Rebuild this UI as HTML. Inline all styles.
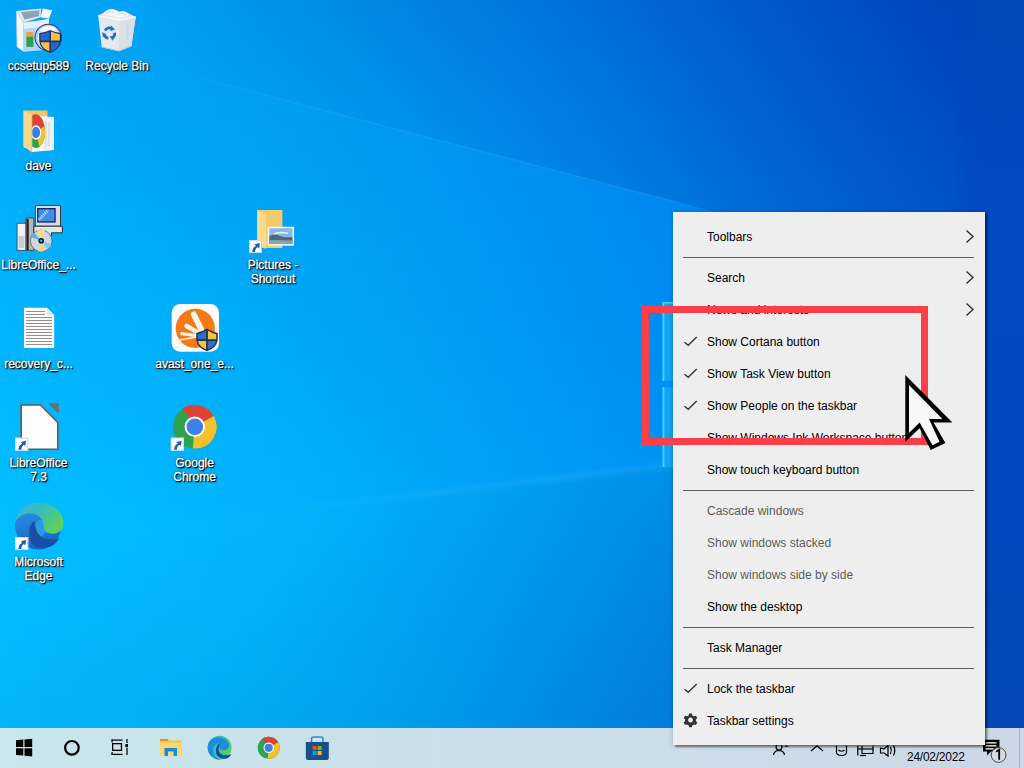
<!DOCTYPE html>
<html><head><meta charset="utf-8">
<style>
html,body{margin:0;padding:0;width:1024px;height:768px;overflow:hidden;}
body{position:relative;font-family:"Liberation Sans",sans-serif;background:#0090e8;}
.bgr{position:absolute;left:0;top:0;width:1024px;height:728px;overflow:hidden;}
.bgr i{position:absolute;left:0;width:1024px;height:8px;display:block;}
.lbl{position:absolute;color:#fff;font-size:12px;line-height:14px;text-align:center;width:90px;-webkit-text-stroke:0.3px #fff;text-shadow:1px 1px 0 #000,1px 1px 2px #000,0 0 2px rgba(0,0,0,.8);white-space:nowrap;}
.ic{position:absolute;}
#taskbar{position:absolute;left:0;top:728px;width:1024px;height:40px;background:linear-gradient(90deg,#c8e6ec 0px,#cae2ea 300px,#ccdde8 620px,#ccd7e6 1024px);}
#menu{position:absolute;left:673px;top:212px;width:312px;height:533px;background:#eeeeee;box-shadow:2px 2px 2px rgba(0,0,0,.45),0 0 5px rgba(0,0,0,.22);}
.mi{position:absolute;left:34px;font-size:12px;color:#000;white-space:nowrap;line-height:14px;}
.dis{color:#5c5c5c;}
.sep{position:absolute;left:10px;width:291px;height:1px;background:#5f5f5f;}
.chk{position:absolute;left:11px;}
.arr{position:absolute;left:290px;}
</style></head><body>
<!--BG-->
<div id="bgM" class="bgr" style="">
<i style="top:0px;background:linear-gradient(90deg,#00a7f6,#00a4f4,#00a1f3,#009ef2,#009bf1,#0097f0,#0093ef,#008fef,#008bef,#0086ee,#0082ee,#007eed,#007aec,#0076eb,#0072e9,#006fe8,#006be6)"></i>
<i style="top:8px;background:linear-gradient(90deg,#00a7f6,#00a4f5,#00a1f3,#009ef2,#009bf1,#0097f0,#0094ef,#008fef,#008bef,#0087ee,#0082ee,#007eed,#007aec,#0076eb,#0073ea,#006fe8,#006be7)"></i>
<i style="top:16px;background:linear-gradient(90deg,#00a8f6,#00a5f5,#00a2f3,#009ff2,#009bf1,#0098f0,#0094ef,#0090ef,#008cef,#0087ef,#0083ee,#007fee,#007bed,#0077eb,#0073ea,#006fe8,#006ce7)"></i>
<i style="top:24px;background:linear-gradient(90deg,#00a8f6,#00a5f5,#00a2f4,#009ff2,#009cf1,#0098f0,#0094f0,#0090ef,#008cef,#0087ef,#0083ee,#007fee,#007bed,#0077ec,#0073ea,#0070e9,#006ce7)"></i>
<i style="top:32px;background:linear-gradient(90deg,#00a8f6,#00a5f5,#00a2f4,#009ff2,#009cf1,#0099f0,#0095f0,#0091ef,#008cef,#0088ef,#0083ef,#007fee,#007bed,#0077ec,#0074ea,#0070e9,#006ce7)"></i>
<i style="top:40px;background:linear-gradient(90deg,#00a9f7,#00a6f5,#00a3f4,#00a0f3,#009df1,#0099f0,#0095f0,#0091ef,#008def,#0088ef,#0084ef,#0080ee,#007bed,#0078ec,#0074ea,#0070e9,#006de7)"></i>
<i style="top:48px;background:linear-gradient(90deg,#00a9f7,#00a6f5,#00a3f4,#00a0f3,#009df2,#009af1,#0096f0,#0091f0,#008def,#0089ef,#0084ef,#0080ee,#007ced,#0078ec,#0074eb,#0071e9,#006de8)"></i>
<i style="top:56px;background:linear-gradient(90deg,#00a9f7,#00a6f6,#00a4f4,#00a1f3,#009df2,#009af1,#0096f0,#0092f0,#008df0,#0089ef,#0084ef,#0080ef,#007cee,#0078ec,#0075eb,#0071e9,#006de8)"></i>
<i style="top:64px;background:linear-gradient(90deg,#00aaf7,#00a7f6,#00a4f4,#00a1f3,#009ef2,#009af1,#0096f0,#0092f0,#008ef0,#0089f0,#0085ef,#0081ef,#007cee,#0079ed,#0075eb,#0071e9,#006ee8)"></i>
<i style="top:72px;background:linear-gradient(90deg,#00aaf7,#00a7f6,#00a4f5,#00a1f3,#009ef2,#009bf1,#0097f0,#0093f0,#008ef0,#008af0,#0085ef,#0081ef,#007dee,#0079ed,#0075eb,#0072ea,#006ee8)"></i>
<i style="top:80px;background:linear-gradient(90deg,#00aaf8,#00a7f6,#00a5f5,#00a2f3,#009ff2,#009bf1,#0097f1,#0093f0,#008ff0,#008af0,#0085f0,#0081ef,#007dee,#0079ed,#0076eb,#0072ea,#006ee8)"></i>
<i style="top:88px;background:linear-gradient(90deg,#00abf8,#00a8f6,#00a5f5,#00a2f4,#009ff2,#009cf1,#0098f1,#0093f0,#008ff0,#008af0,#0086f0,#0081ef,#007dee,#007aed,#0076ec,#0072ea,#006fe8)"></i>
<i style="top:96px;background:linear-gradient(90deg,#00abf8,#00a8f7,#00a5f5,#00a3f4,#00a0f2,#009cf2,#0098f1,#0094f0,#008ff0,#008bf0,#0086f0,#0082ef,#007eee,#007aed,#0076ec,#0073ea,#006fe9)"></i>
<i style="top:104px;background:linear-gradient(90deg,#00abf8,#00a8f7,#00a6f5,#00a3f4,#00a0f3,#009cf2,#0099f1,#0094f1,#0090f0,#008bf0,#0086f0,#0082f0,#007eef,#007aed,#0076ec,#0073ea,#006fe9)"></i>
<i style="top:112px;background:linear-gradient(90deg,#00acf8,#00a9f7,#00a6f5,#00a3f4,#00a0f3,#009df2,#0099f1,#0095f1,#0090f1,#008bf0,#0087f0,#0082f0,#007eef,#007aee,#0077ec,#0073eb,#0070e9)"></i>
<i style="top:120px;background:linear-gradient(90deg,#00acf8,#00a9f7,#00a7f6,#00a4f4,#00a1f3,#009df2,#0099f1,#0095f1,#0090f1,#008cf1,#0087f0,#0083f0,#007fef,#007bee,#0077ec,#0074eb,#0070e9)"></i>
<i style="top:128px;background:linear-gradient(90deg,#00acf9,#00a9f7,#00a7f6,#00a4f4,#00a1f3,#009ef2,#009af1,#0095f1,#0091f1,#008cf1,#0087f0,#0083f0,#007fef,#007bee,#0077ec,#0074eb,#0070e9)"></i>
<i style="top:136px;background:linear-gradient(90deg,#00adf9,#00aaf7,#00a7f6,#00a5f5,#00a2f3,#009ef2,#009af2,#0096f1,#0091f1,#008cf1,#0088f1,#0083f0,#007fef,#007bee,#0078ed,#0074eb,#0071e9)"></i>
<i style="top:144px;background:linear-gradient(90deg,#00adf9,#00aaf8,#00a8f6,#00a5f5,#00a2f4,#009ef2,#009bf2,#0096f1,#0091f1,#008df1,#0088f1,#0084f0,#0080ef,#007cee,#0078ed,#0075eb,#0071ea)"></i>
<i style="top:152px;background:linear-gradient(90deg,#00adf9,#00abf8,#00a8f6,#00a5f5,#00a2f4,#009ff3,#009bf2,#0097f1,#0092f1,#008df1,#0088f1,#0084f0,#0080f0,#007cee,#0078ed,#0075eb,#0072ea)"></i>
<i style="top:160px;background:linear-gradient(90deg,#00aef9,#00abf8,#00a8f7,#00a6f5,#00a3f4,#009ff3,#009bf2,#0097f2,#0092f1,#008df1,#0089f1,#0084f0,#0080f0,#007cef,#0079ed,#0075ec,#0072ea)"></i>
<i style="top:168px;background:linear-gradient(90deg,#00aefa,#00abf8,#00a9f7,#00a6f5,#00a3f4,#00a0f3,#009cf2,#0097f2,#0093f1,#008ef1,#0089f1,#0085f1,#0080f0,#007def,#0079ed,#0076ec,#0072ea)"></i>
<i style="top:176px;background:linear-gradient(90deg,#00aefa,#00acf8,#00a9f7,#00a6f6,#00a4f4,#00a0f3,#009cf2,#0098f2,#0093f2,#008ef1,#0089f1,#0085f1,#0081f0,#007def,#0079ed,#0076ec,#0073ea)"></i>
<i style="top:184px;background:linear-gradient(90deg,#00affa,#00acf9,#00a9f7,#00a7f6,#00a4f4,#00a0f3,#009cf2,#0098f2,#0093f2,#008ef2,#008af1,#0085f1,#0081f0,#007def,#007aee,#0076ec,#0073ea)"></i>
<i style="top:192px;background:linear-gradient(90deg,#00affa,#00acf9,#00aaf7,#00a7f6,#00a4f5,#00a1f3,#009df3,#0098f2,#0094f2,#008ff2,#008af1,#0085f1,#0081f0,#007eef,#007aee,#0077ec,#0073eb)"></i>
<i style="top:200px;background:linear-gradient(90deg,#00affa,#00adf9,#00aaf8,#00a8f6,#00a5f5,#00a1f4,#009df3,#0099f2,#0094f2,#008ff2,#008af2,#0086f1,#0082f0,#007eef,#007aee,#0077ec,#0074eb)"></i>
<i style="top:208px;background:linear-gradient(90deg,#00b0fb,#00adf9,#00abf8,#00a8f6,#00a5f5,#00a2f4,#009ef3,#0099f2,#0094f2,#008ff2,#008af2,#0086f1,#0082f0,#007eef,#007bee,#0077ec,#0074eb)"></i>
<i style="top:216px;background:linear-gradient(90deg,#00b0fb,#00adf9,#00abf8,#00a8f7,#00a5f5,#00a2f4,#009ef3,#0099f2,#0095f2,#0090f2,#008bf2,#0086f1,#0082f1,#007eef,#007bee,#0078ed,#0074eb)"></i>
<i style="top:224px;background:linear-gradient(90deg,#00b0fb,#00aefa,#00abf8,#00a9f7,#00a6f5,#00a2f4,#009ef3,#009af3,#0095f2,#0090f2,#008bf2,#0087f1,#0083f1,#007ff0,#007bee,#0078ed,#0075eb)"></i>
<i style="top:232px;background:linear-gradient(90deg,#00b1fb,#00aefa,#00acf8,#00a9f7,#00a6f6,#00a3f4,#009ff3,#009af3,#0095f2,#0090f2,#008bf2,#0087f1,#0083f1,#007ff0,#007cee,#0078ed,#0075eb)"></i>
<i style="top:240px;background:linear-gradient(90deg,#00b1fb,#00aefa,#00acf9,#00aaf7,#00a7f6,#00a3f5,#009ff4,#009bf3,#0096f2,#0091f2,#008cf2,#0087f2,#0083f1,#007ff0,#007cef,#0079ed,#0075ec)"></i>
<i style="top:248px;background:linear-gradient(90deg,#00b1fb,#00affa,#00acf9,#00aaf7,#00a7f6,#00a4f5,#00a0f4,#009bf3,#0096f3,#0091f2,#008cf2,#0088f2,#0083f1,#0080f0,#007cef,#0079ed,#0076ec)"></i>
<i style="top:256px;background:linear-gradient(90deg,#00b2fc,#00affa,#00adf9,#00aaf8,#00a7f6,#00a4f5,#00a0f4,#009bf3,#0096f3,#0091f2,#008cf2,#0088f2,#0084f1,#0080f0,#007def,#0079ed,#0076ec)"></i>
<i style="top:264px;background:linear-gradient(90deg,#00b2fc,#00affb,#00adf9,#00abf8,#00a8f6,#00a4f5,#00a0f4,#009cf3,#0097f3,#0092f3,#008df2,#0088f2,#0084f1,#0080f0,#007def,#007aed,#0076ec)"></i>
<i style="top:272px;background:linear-gradient(90deg,#00b2fc,#00b0fb,#00adfa,#00abf8,#00a8f7,#00a5f5,#00a1f4,#009cf3,#0097f3,#0092f3,#008df2,#0088f2,#0084f1,#0081f0,#007def,#007aee,#0077ec)"></i>
<i style="top:280px;background:linear-gradient(90deg,#00b3fc,#00b0fb,#00aefa,#00abf8,#00a9f7,#00a5f5,#00a1f4,#009cf4,#0097f3,#0092f3,#008df2,#0089f2,#0085f1,#0081f0,#007eef,#007aee,#0077ec)"></i>
<i style="top:288px;background:linear-gradient(90deg,#00b3fc,#00b1fb,#00aefa,#00acf8,#00a9f7,#00a5f6,#00a1f5,#009df4,#0098f3,#0093f3,#008ef3,#0089f2,#0085f1,#0081f0,#007eef,#007bee,#0077ec)"></i>
<i style="top:296px;background:linear-gradient(90deg,#00b3fd,#00b1fb,#00affa,#00acf9,#00a9f7,#00a6f6,#00a2f5,#009df4,#0098f3,#0093f3,#008ef3,#0089f2,#0085f1,#0082f1,#007eef,#007bee,#0078ed)"></i>
<i style="top:304px;background:linear-gradient(90deg,#00b4fd,#00b1fc,#00affa,#00adf9,#00aaf7,#00a6f6,#00a2f5,#009df4,#0098f3,#0093f3,#008ef3,#008af2,#0086f2,#0082f1,#007fef,#007bee,#0078ed)"></i>
<i style="top:312px;background:linear-gradient(90deg,#01b4fd,#00b2fc,#00affb,#00adf9,#00aaf8,#00a7f6,#00a2f5,#009ef4,#0099f4,#0093f3,#008ff3,#008af2,#0086f2,#0082f1,#007ff0,#007cee,#0079ed)"></i>
<i style="top:320px;background:linear-gradient(90deg,#01b4fd,#00b2fc,#00b0fb,#00adf9,#00aaf8,#00a7f6,#00a3f5,#009ef4,#0099f4,#0094f3,#008ff3,#008af2,#0086f2,#0083f1,#007ff0,#007cee,#0079ed)"></i>
<i style="top:328px;background:linear-gradient(90deg,#01b5fd,#00b2fc,#00b0fb,#00aefa,#00abf8,#00a7f7,#00a3f5,#009ef4,#0099f4,#0094f3,#008ff3,#008bf2,#0087f2,#0083f1,#0080f0,#007cee,#0079ed)"></i>
<i style="top:336px;background:linear-gradient(90deg,#01b5fe,#01b3fc,#00b0fb,#00aefa,#00abf8,#00a8f7,#00a4f6,#009ff5,#009af4,#0094f3,#0090f3,#008bf3,#0087f2,#0083f1,#0080f0,#007def,#007aed)"></i>
<i style="top:344px;background:linear-gradient(90deg,#01b6fe,#01b3fd,#00b1fb,#00aefa,#00acf8,#00a8f7,#00a4f6,#009ff5,#009af4,#0095f4,#0090f3,#008bf3,#0087f2,#0084f1,#0080f0,#007def,#007aed)"></i>
<i style="top:352px;background:linear-gradient(90deg,#01b6fe,#01b4fd,#00b1fc,#00affa,#00acf9,#00a8f7,#00a4f6,#009ff5,#009af4,#0095f4,#0090f3,#008cf3,#0088f2,#0084f1,#0081f0,#007def,#007aed)"></i>
<i style="top:360px;background:linear-gradient(90deg,#01b6fe,#01b4fd,#00b2fc,#00affa,#00acf9,#00a9f7,#00a5f6,#00a0f5,#009bf4,#0095f4,#0091f3,#008cf3,#0088f2,#0084f1,#0081f0,#007eef,#007bee)"></i>
<i style="top:368px;background:linear-gradient(90deg,#01b7fe,#01b4fd,#01b2fc,#00b0fb,#00adf9,#00a9f8,#00a5f6,#00a0f5,#009bf4,#0096f4,#0091f3,#008cf3,#0088f2,#0085f1,#0081f0,#007eef,#007bee)"></i>
<i style="top:376px;background:linear-gradient(90deg,#01b7fe,#01b5fd,#01b2fc,#00b0fb,#00adf9,#00aaf8,#00a5f7,#00a1f5,#009bf5,#0096f4,#0091f4,#008df3,#0089f2,#0085f1,#0082f0,#007fef,#007bee)"></i>
<i style="top:384px;background:linear-gradient(90deg,#01b8ff,#01b5fe,#01b3fc,#00b0fb,#00adfa,#00aaf8,#00a6f7,#00a1f6,#009cf5,#0097f4,#0092f4,#008df3,#0089f2,#0085f2,#0082f1,#007fef,#007cee)"></i>
<i style="top:392px;background:linear-gradient(90deg,#01b8ff,#01b5fe,#01b3fd,#00b1fb,#00aefa,#00aaf8,#00a6f7,#00a1f6,#009cf5,#0097f4,#0092f4,#008df3,#0089f3,#0086f2,#0082f1,#007fef,#007cee)"></i>
<i style="top:400px;background:linear-gradient(90deg,#01b8ff,#01b6fe,#01b3fd,#00b1fb,#00aefa,#00abf8,#00a6f7,#00a2f6,#009cf5,#0097f4,#0092f4,#008ef3,#008af3,#0086f2,#0083f1,#0080f0,#007dee)"></i>
<i style="top:408px;background:linear-gradient(90deg,#01b9ff,#01b6fe,#01b4fd,#00b1fc,#00aefa,#00abf9,#00a7f7,#00a2f6,#009df5,#0098f5,#0093f4,#008ef3,#008af3,#0087f2,#0083f1,#0080f0,#007dee)"></i>
<i style="top:416px;background:linear-gradient(90deg,#01b9ff,#01b7fe,#01b4fd,#01b2fc,#00affa,#00abf9,#00a7f8,#00a2f6,#009df5,#0098f5,#0093f4,#008ff3,#008af3,#0087f2,#0084f1,#0080f0,#007def)"></i>
<i style="top:424px;background:linear-gradient(90deg,#01baff,#01b7fe,#01b5fd,#01b2fc,#00affb,#00acf9,#00a7f8,#00a3f6,#009df6,#0098f5,#0093f4,#008ff4,#008bf3,#0087f2,#0084f1,#0081f0,#007eef)"></i>
<i style="top:432px;background:linear-gradient(90deg,#01baff,#01b7ff,#01b5fe,#01b3fc,#00b0fb,#00acf9,#00a8f8,#00a3f7,#009ef6,#0099f5,#0094f4,#008ff4,#008bf3,#0088f2,#0084f1,#0081f0,#007eef)"></i>
<i style="top:440px;background:linear-gradient(90deg,#01baff,#01b8ff,#01b5fe,#01b3fc,#00b0fb,#00acfa,#00a8f8,#00a3f7,#009ef6,#0099f5,#0094f4,#0090f4,#008cf3,#0088f2,#0085f1,#0082f0,#007eef)"></i>
<i style="top:448px;background:linear-gradient(90deg,#01bbff,#01b8ff,#01b6fe,#01b3fd,#00b0fb,#00adfa,#00a8f8,#00a4f7,#009ff6,#0099f5,#0095f5,#0090f4,#008cf3,#0088f2,#0085f1,#0082f0,#007fef)"></i>
<i style="top:456px;background:linear-gradient(90deg,#01bbff,#01b9ff,#01b6fe,#01b4fd,#00b1fb,#00adfa,#00a9f9,#00a4f7,#009ff6,#009af5,#0095f5,#0090f4,#008cf3,#0089f3,#0086f2,#0082f0,#007fef)"></i>
<i style="top:464px;background:linear-gradient(90deg,#01bcff,#01b9ff,#01b7fe,#01b4fd,#00b1fc,#00adfa,#00a9f9,#00a4f7,#009ff6,#009af5,#0095f5,#0091f4,#008df3,#0089f3,#0086f2,#0083f1,#0080ef)"></i>
<i style="top:472px;background:linear-gradient(90deg,#01bcff,#01b9ff,#01b7fe,#01b4fd,#00b1fc,#00aefa,#00aaf9,#00a5f8,#00a0f7,#009bf6,#0096f5,#0091f4,#008df4,#008af3,#0086f2,#0083f1,#0080f0)"></i>
<i style="top:480px;background:linear-gradient(90deg,#01bdff,#01baff,#01b7ff,#01b5fd,#01b2fc,#00aefb,#00aaf9,#00a5f8,#00a0f7,#009bf6,#0096f5,#0092f4,#008ef4,#008af3,#0087f2,#0084f1,#0080f0)"></i>
<i style="top:488px;background:linear-gradient(90deg,#01bdff,#01baff,#01b8ff,#01b5fe,#01b2fc,#00aefb,#00aaf9,#00a5f8,#00a0f7,#009bf6,#0096f5,#0092f5,#008ef4,#008af3,#0087f2,#0084f1,#0081f0)"></i>
<i style="top:496px;background:linear-gradient(90deg,#01bdff,#01bbff,#01b8ff,#01b5fe,#01b2fc,#00affb,#00abfa,#00a6f8,#00a1f7,#009cf6,#0097f5,#0092f5,#008ef4,#008bf3,#0088f2,#0084f1,#0081f0)"></i>
<i style="top:504px;background:linear-gradient(90deg,#01beff,#01bbff,#01b9ff,#01b6fe,#01b3fd,#00affb,#00abfa,#00a6f8,#00a1f7,#009cf6,#0097f6,#0093f5,#008ff4,#008bf3,#0088f2,#0085f1,#0082f0)"></i>
<i style="top:512px;background:linear-gradient(90deg,#01beff,#01bcff,#01b9ff,#01b6fe,#01b3fd,#00b0fb,#00abfa,#00a7f9,#00a2f7,#009cf6,#0098f6,#0093f5,#008ff4,#008cf3,#0088f2,#0085f1,#0082f0)"></i>
<i style="top:520px;background:linear-gradient(90deg,#01bfff,#01bcff,#01b9ff,#01b7fe,#01b4fd,#00b0fc,#00acfa,#00a7f9,#00a2f8,#009df7,#0098f6,#0094f5,#0090f4,#008cf3,#0089f3,#0086f1,#0082f0)"></i>
<i style="top:528px;background:linear-gradient(90deg,#01bfff,#01bcff,#01baff,#01b7ff,#01b4fd,#00b0fc,#00acfa,#00a7f9,#00a2f8,#009df7,#0098f6,#0094f5,#0090f4,#008df4,#0089f3,#0086f2,#0083f0)"></i>
<i style="top:536px;background:linear-gradient(90deg,#01c0ff,#01bdff,#01baff,#01b7ff,#01b4fd,#00b1fc,#00acfb,#00a8f9,#00a3f8,#009ef7,#0099f6,#0095f5,#0091f5,#008df4,#008af3,#0086f2,#0083f1)"></i>
<i style="top:544px;background:linear-gradient(90deg,#02c0ff,#01bdff,#01baff,#01b8ff,#01b5fe,#00b1fc,#00adfb,#00a8f9,#00a3f8,#009ef7,#0099f6,#0095f5,#0091f5,#008df4,#008af3,#0087f2,#0084f1)"></i>
<i style="top:552px;background:linear-gradient(90deg,#02c0ff,#01beff,#01bbff,#01b8ff,#01b5fe,#00b1fc,#00adfb,#00a8fa,#00a3f8,#009ef7,#009af6,#0095f6,#0091f5,#008ef4,#008bf3,#0087f2,#0084f1)"></i>
<i style="top:560px;background:linear-gradient(90deg,#02c1ff,#01beff,#01bbff,#01b8ff,#01b5fe,#01b2fd,#00adfb,#00a9fa,#00a4f9,#009ff8,#009af7,#0096f6,#0092f5,#008ef4,#008bf3,#0088f2,#0084f1)"></i>
<i style="top:568px;background:linear-gradient(90deg,#02c1ff,#01beff,#01bcff,#01b9ff,#01b6fe,#01b2fd,#00aefb,#00a9fa,#00a4f9,#009ff8,#009bf7,#0096f6,#0092f5,#008ff4,#008bf3,#0088f2,#0085f1)"></i>
<i style="top:576px;background:linear-gradient(90deg,#02c2ff,#01bfff,#01bcff,#01b9ff,#01b6fe,#01b2fd,#00aefc,#00a9fa,#00a5f9,#00a0f8,#009bf7,#0097f6,#0093f5,#008ff4,#008cf3,#0089f2,#0085f1)"></i>
<i style="top:584px;background:linear-gradient(90deg,#02c2ff,#02bfff,#01bcff,#01baff,#01b6ff,#01b3fd,#00aefc,#00aafa,#00a5f9,#00a0f8,#009bf7,#0097f6,#0093f5,#0090f5,#008cf4,#0089f3,#0086f2)"></i>
<i style="top:592px;background:linear-gradient(90deg,#02c3ff,#02c0ff,#01bdff,#01baff,#01b7ff,#01b3fd,#00affc,#00aafb,#00a5f9,#00a1f8,#009cf7,#0098f6,#0094f6,#0090f5,#008df4,#0089f3,#0086f2)"></i>
<i style="top:600px;background:linear-gradient(90deg,#02c3ff,#02c0ff,#01bdff,#01baff,#01b7ff,#01b3fe,#00affc,#00abfb,#00a6fa,#00a1f8,#009cf7,#0098f7,#0094f6,#0090f5,#008df4,#008af3,#0087f2)"></i>
<i style="top:608px;background:linear-gradient(90deg,#02c3ff,#02c0ff,#01beff,#01bbff,#01b7ff,#01b4fe,#00b0fc,#00abfb,#00a6fa,#00a1f9,#009df8,#0098f7,#0095f6,#0091f5,#008ef4,#008af3,#0087f2)"></i>
<i style="top:616px;background:linear-gradient(90deg,#02c4ff,#02c1ff,#01beff,#01bbff,#01b8ff,#01b4fe,#00b0fd,#00abfb,#00a7fa,#00a2f9,#009df8,#0099f7,#0095f6,#0091f5,#008ef4,#008bf3,#0087f2)"></i>
<i style="top:624px;background:linear-gradient(90deg,#02c4ff,#02c1ff,#01beff,#01bbff,#01b8ff,#01b4fe,#01b0fd,#00acfb,#00a7fa,#00a2f9,#009ef8,#0099f7,#0095f6,#0092f5,#008ef4,#008bf3,#0088f2)"></i>
<i style="top:632px;background:linear-gradient(90deg,#02c5ff,#02c2ff,#01bfff,#01bcff,#01b8ff,#01b5fe,#01b1fd,#00acfc,#00a7fa,#00a3f9,#009ef8,#009af7,#0096f6,#0092f5,#008ff4,#008cf3,#0088f2)"></i>
<i style="top:640px;background:linear-gradient(90deg,#02c5ff,#02c2ff,#01bfff,#01bcff,#01b9ff,#01b5ff,#01b1fd,#00acfc,#00a8fb,#00a3f9,#009ef8,#009af7,#0096f7,#0093f6,#008ff5,#008cf4,#0089f3)"></i>
<i style="top:648px;background:linear-gradient(90deg,#02c6ff,#02c3ff,#01c0ff,#01bcff,#01b9ff,#01b5ff,#01b1fd,#00adfc,#00a8fb,#00a3fa,#009ff9,#009bf8,#0097f7,#0093f6,#0090f5,#008cf4,#0089f3)"></i>
<i style="top:656px;background:linear-gradient(90deg,#02c6ff,#02c3ff,#02c0ff,#01bdff,#01b9ff,#01b6ff,#01b2fe,#00adfc,#00a8fb,#00a4fa,#009ff9,#009bf8,#0097f7,#0094f6,#0090f5,#008df4,#0089f3)"></i>
<i style="top:664px;background:linear-gradient(90deg,#02c6ff,#02c3ff,#02c0ff,#01bdff,#01baff,#01b6ff,#01b2fe,#01aefc,#00a9fb,#00a4fa,#00a0f9,#009cf8,#0098f7,#0094f6,#0091f5,#008df4,#008af3)"></i>
<i style="top:672px;background:linear-gradient(90deg,#02c7ff,#02c4ff,#02c1ff,#01beff,#01baff,#01b6ff,#01b2fe,#01aefd,#00a9fb,#00a5fa,#00a0f9,#009cf8,#0098f7,#0095f6,#0091f5,#008ef4,#008af3)"></i>
<i style="top:680px;background:linear-gradient(90deg,#02c7ff,#02c4ff,#02c1ff,#01beff,#01bbff,#01b7ff,#01b3fe,#01aefd,#00aafc,#00a5fa,#00a1f9,#009df8,#0099f7,#0095f6,#0091f5,#008ef4,#008bf3)"></i>
<i style="top:688px;background:linear-gradient(90deg,#02c8ff,#02c5ff,#02c1ff,#01beff,#01bbff,#01b7ff,#01b3fe,#01affd,#00aafc,#00a6fb,#00a1f9,#009df8,#0099f8,#0095f7,#0092f6,#008ef5,#008bf4)"></i>
<i style="top:696px;background:linear-gradient(90deg,#02c8ff,#02c5ff,#02c2ff,#01bfff,#01bbff,#01b7ff,#01b3fe,#01affd,#01aafc,#00a6fb,#00a2fa,#009df9,#009af8,#0096f7,#0092f6,#008ff5,#008bf4)"></i>
<i style="top:704px;background:linear-gradient(90deg,#02c9ff,#02c5ff,#02c2ff,#01bfff,#01bcff,#01b8ff,#01b4ff,#01affd,#01abfc,#00a6fb,#00a2fa,#009ef9,#009af8,#0096f7,#0093f6,#008ff5,#008cf4)"></i>
<i style="top:712px;background:linear-gradient(90deg,#02c9ff,#02c6ff,#02c3ff,#01bfff,#01bcff,#01b8ff,#01b4ff,#01b0fe,#01abfc,#01a7fb,#00a2fa,#009ef9,#009af8,#0097f7,#0093f6,#0090f5,#008cf4)"></i>
<i style="top:720px;background:linear-gradient(90deg,#02c9ff,#02c6ff,#02c3ff,#01c0ff,#01bcff,#01b8ff,#01b4ff,#01b0fe,#01acfc,#01a7fb,#01a3fa,#009ff9,#009bf8,#0097f7,#0094f6,#0090f5,#008df4)"></i>
</div>
<div id="bgA" class="bgr" style="clip-path:polygon(0 0,1024px 0,1024px 292.2px,0 26px);-webkit-mask-image:linear-gradient(90deg,transparent 60px,#000 260px);mask-image:linear-gradient(90deg,transparent 60px,#000 260px)">
<i style="top:0px;background:linear-gradient(90deg,#00b0fc,#00a9f7,#00a2f3,#009bef,#0094eb,#008ee7,#0087e4,#0080e0,#0078dd,#0070d9,#0068d5,#0060d0,#0058ca,#0051c5,#004abf,#0044ba,#003eb5)"></i>
<i style="top:8px;background:linear-gradient(90deg,#00b1fd,#00a9f8,#00a2f3,#009cef,#0095eb,#008ee8,#0088e4,#0081e1,#0079de,#0071da,#0069d5,#0060d0,#0059cb,#0051c5,#004bc0,#0045bb,#003fb6)"></i>
<i style="top:16px;background:linear-gradient(90deg,#00b2fd,#00aaf8,#00a3f4,#009cf0,#0096ec,#008fe8,#0089e5,#0081e2,#007ade,#0072da,#0069d6,#0061d1,#0059cb,#0052c6,#004bc0,#0045bb,#003fb6)"></i>
<i style="top:24px;background:linear-gradient(90deg,#00b2fe,#00abf9,#00a4f4,#009df0,#0096ec,#0090e9,#0089e6,#0082e2,#007bdf,#0073db,#006ad6,#0062d1,#005acc,#0053c6,#004cc1,#0046bc,#0040b7)"></i>
<i style="top:32px;background:linear-gradient(90deg,#00b3fe,#00abfa,#00a4f5,#009ef1,#0097ed,#0091e9,#008ae6,#0083e3,#007bdf,#0073db,#006bd7,#0063d2,#005bcd,#0053c7,#004cc1,#0046bc,#0040b7)"></i>
<i style="top:40px;background:linear-gradient(90deg,#00b3ff,#00acfa,#00a5f6,#009ef1,#0098ee,#0092ea,#008be7,#0084e3,#007ce0,#0074dc,#006cd7,#0063d2,#005bcd,#0054c7,#004dc2,#0047bd,#0041b8)"></i>
<i style="top:48px;background:linear-gradient(90deg,#00b4ff,#00adfb,#00a6f6,#009ff2,#0099ee,#0092eb,#008ce7,#0085e4,#007de1,#0075dd,#006cd8,#0064d3,#005cce,#0054c8,#004ec2,#0047bd,#0041b8)"></i>
<i style="top:56px;background:linear-gradient(90deg,#00b5ff,#00adfb,#00a6f7,#00a0f3,#0099ef,#0093eb,#008ce8,#0085e5,#007ee1,#0076dd,#006dd9,#0065d4,#005dce,#0055c8,#004ec3,#0048be,#0042b9)"></i>
<i style="top:64px;background:linear-gradient(90deg,#00b5ff,#00aefc,#00a7f7,#00a1f3,#009aef,#0094ec,#008de9,#0086e5,#007fe2,#0077de,#006ed9,#0066d4,#005dcf,#0056c9,#004fc3,#0048be,#0142b9)"></i>
<i style="top:72px;background:linear-gradient(90deg,#00b6ff,#00affc,#00a8f8,#00a1f4,#009bf0,#0095ec,#008ee9,#0087e6,#0080e2,#0077de,#006fda,#0066d5,#005ecf,#0056c9,#004fc4,#0049bf,#0143ba)"></i>
<i style="top:80px;background:linear-gradient(90deg,#00b7ff,#00affd,#00a9f8,#00a2f4,#009cf0,#0095ed,#008fea,#0088e6,#0080e3,#0078df,#0070da,#0067d5,#005fd0,#0057ca,#0050c4,#0049bf,#0143ba)"></i>
<i style="top:88px;background:linear-gradient(90deg,#00b7ff,#00b0fe,#00a9f9,#00a3f5,#009cf1,#0096ee,#0090ea,#0089e7,#0081e3,#0079df,#0070db,#0068d6,#005fd0,#0058ca,#0050c5,#004ac0,#0143bb)"></i>
<i style="top:96px;background:linear-gradient(90deg,#00b8ff,#00b1fe,#00aafa,#00a3f5,#009df2,#0097ee,#0090eb,#008ae8,#0082e4,#007ae0,#0071db,#0068d6,#0060d1,#0058cb,#0051c5,#014ac0,#0144bb)"></i>
<i style="top:104px;background:linear-gradient(90deg,#00b9ff,#00b2ff,#00abfa,#00a4f6,#009ef2,#0098ef,#0091ec,#008ae8,#0083e5,#007be1,#0072dc,#0069d7,#0061d1,#0059cb,#0051c6,#014bc1,#0144bc)"></i>
<i style="top:112px;background:linear-gradient(90deg,#00b9ff,#00b2ff,#00abfb,#00a5f7,#009ff3,#0098ef,#0092ec,#008be9,#0084e5,#007be1,#0073dc,#006ad7,#0061d2,#0059cc,#0052c6,#014bc1,#0145bc)"></i>
<i style="top:120px;background:linear-gradient(90deg,#00baff,#00b3ff,#00acfb,#00a6f7,#009ff3,#0099f0,#0093ed,#008ce9,#0084e6,#007ce2,#0074dd,#006bd8,#0062d2,#005acc,#0053c7,#014cc2,#0145bd)"></i>
<i style="top:128px;background:linear-gradient(90deg,#00bbff,#00b4ff,#00adfc,#00a6f8,#00a0f4,#009af1,#0094ed,#008dea,#0085e6,#007de2,#0074dd,#006bd8,#0063d3,#005bcd,#0053c7,#014cc2,#0146bd)"></i>
<i style="top:136px;background:linear-gradient(90deg,#00bbff,#00b4ff,#00adfd,#00a7f8,#00a1f5,#009bf1,#0094ee,#008deb,#0086e7,#007ee3,#0075de,#006cd9,#0063d3,#005bcd,#0154c8,#014dc3,#0146be)"></i>
<i style="top:144px;background:linear-gradient(90deg,#00bcff,#00b5ff,#00aefd,#00a8f9,#00a1f5,#009bf2,#0095ee,#008eeb,#0087e7,#007fe3,#0076df,#006dd9,#0064d4,#005cce,#0154c8,#014dc3,#0147be)"></i>
<i style="top:152px;background:linear-gradient(90deg,#00bdff,#00b6ff,#00affe,#00a8fa,#00a2f6,#009cf2,#0096ef,#008fec,#0087e8,#007fe4,#0077df,#006eda,#0065d4,#005ccf,#0155c9,#014ec4,#0147bf)"></i>
<i style="top:160px;background:linear-gradient(90deg,#00beff,#00b6ff,#00b0fe,#00a9fa,#00a3f7,#009df3,#0097f0,#0090ec,#0088e9,#0080e4,#0077e0,#006eda,#0065d5,#005dcf,#0155c9,#014ec4,#0148bf)"></i>
<i style="top:168px;background:linear-gradient(90deg,#00beff,#00b7ff,#00b0ff,#00aafb,#00a4f7,#009ef4,#0097f0,#0090ed,#0089e9,#0081e5,#0078e0,#006fdb,#0066d5,#005ed0,#0156ca,#014fc5,#0148c0)"></i>
<i style="top:176px;background:linear-gradient(90deg,#00bfff,#00b8ff,#01b1ff,#01aafc,#01a4f8,#019ef4,#0098f1,#0091ed,#008aea,#0082e5,#0079e1,#0070db,#0067d6,#015ed0,#0157ca,#014fc5,#0149c0)"></i>
<i style="top:184px;background:linear-gradient(90deg,#00c0ff,#00b8ff,#01b2ff,#01abfc,#01a5f8,#019ff5,#0099f1,#0092ee,#008bea,#0082e6,#007ae1,#0070dc,#0068d6,#015fd1,#0157cb,#0150c6,#0149c1)"></i>
<i style="top:192px;background:linear-gradient(90deg,#00c0ff,#01b9ff,#01b2ff,#01acfd,#01a6f9,#01a0f5,#0199f2,#0093ef,#008beb,#0083e7,#007ae2,#0071dc,#0068d7,#0160d1,#0158cb,#0151c6,#014ac1)"></i>
<i style="top:200px;background:linear-gradient(90deg,#01c1ff,#01baff,#01b3ff,#01adfd,#01a6fa,#01a0f6,#019af3,#0093ef,#008ceb,#0084e7,#007be2,#0072dd,#0069d7,#0160d2,#0158cc,#0151c7,#014ac2)"></i>
<i style="top:208px;background:linear-gradient(90deg,#01c2ff,#01baff,#01b4ff,#01adfe,#01a7fa,#01a1f7,#019bf3,#0094f0,#008dec,#0085e8,#007ce3,#0073dd,#016ad8,#0161d2,#0159cc,#0152c7,#014bc2)"></i>
<i style="top:216px;background:linear-gradient(90deg,#01c2ff,#01bbff,#01b4ff,#01aeff,#01a8fb,#01a2f7,#019cf4,#0195f0,#008dec,#0085e8,#007ce3,#0073de,#016ad8,#0162d3,#015acd,#0152c8,#014bc3)"></i>
<i style="top:224px;background:linear-gradient(90deg,#01c3ff,#01bcff,#01b5ff,#01afff,#01a9fb,#01a2f8,#019cf4,#0196f1,#008eed,#0086e9,#007de4,#0074de,#016bd9,#0162d3,#015ace,#0153c8,#014cc3)"></i>
<i style="top:232px;background:linear-gradient(90deg,#01c4ff,#01bdff,#01b6ff,#01afff,#01a9fc,#01a3f8,#019df5,#0196f1,#018fed,#0087e9,#007ee4,#0075df,#016cd9,#0163d4,#015bce,#0153c9,#014cc4)"></i>
<i style="top:240px;background:linear-gradient(90deg,#01c4ff,#01bdff,#01b6ff,#01b0ff,#01aafd,#01a4f9,#019ef5,#0197f2,#018fee,#0087ea,#007fe5,#0175e0,#016cda,#0163d4,#015bcf,#0154c9,#014dc4)"></i>
<i style="top:248px;background:linear-gradient(90deg,#01c5ff,#01beff,#01b7ff,#01b1ff,#01abfd,#01a5fa,#019ef6,#0198f2,#0190ef,#0188ea,#017fe5,#0176e0,#016dda,#0164d5,#015ccf,#0154ca,#024dc5)"></i>
<i style="top:256px;background:linear-gradient(90deg,#01c6ff,#01bfff,#01b8ff,#01b1ff,#01abfe,#01a5fa,#019ff7,#0198f3,#0191ef,#0189eb,#0180e6,#0177e1,#016edb,#0165d5,#015dd0,#0155ca,#024ec6)"></i>
<i style="top:264px;background:linear-gradient(90deg,#01c6ff,#01bfff,#01b9ff,#01b2ff,#01acfe,#01a6fb,#01a0f7,#0199f4,#0192f0,#0189eb,#0181e6,#0177e1,#016edb,#0165d6,#015dd0,#0156cb,#024ec6)"></i>
<i style="top:272px;background:linear-gradient(90deg,#01c7ff,#01c0ff,#01b9ff,#01b3ff,#01adff,#01a6fb,#01a0f8,#019af4,#0192f0,#018aec,#0181e7,#0178e2,#016fdc,#0166d6,#015ed1,#0156cb,#024fc7)"></i>
<i style="top:280px;background:linear-gradient(90deg,#01c8ff,#01c1ff,#01baff,#01b3ff,#01adff,#01a7fc,#01a1f8,#019af5,#0193f1,#018bec,#0182e7,#0179e2,#0170dc,#0167d7,#015ed1,#0157cc,#0250c7)"></i>
<i style="top:288px;background:linear-gradient(90deg,#01c8ff,#01c1ff,#01bbff,#01b4ff,#01aeff,#01a8fc,#01a2f9,#019bf5,#0193f1,#018bed,#0183e8,#0179e3,#0170dd,#0167d7,#015fd2,#0157cd,#0250c8)"></i>
<i style="top:296px;background:linear-gradient(90deg,#01c9ff,#01c2ff,#01bbff,#01b5ff,#01afff,#01a8fd,#01a2f9,#019bf6,#0194f2,#018ced,#0183e8,#017ae3,#0171dd,#0168d8,#0160d2,#0258cd,#0251c8)"></i>
</div>
<div id="bgL" class="bgr" style="clip-path:polygon(0 541.8px,1024px 426.1px,1024px 728px,0 728px)">
<i style="top:416px;background:linear-gradient(90deg,#03c8ff,#03c4ff,#02c0ff,#02bdff,#02b9ff,#02b5fd,#01affb,#01a9f8,#01a3f5,#009cf1,#0095ee,#008feb,#0089e8,#0083e5,#007ee2,#0079df,#0075dd)"></i>
<i style="top:424px;background:linear-gradient(90deg,#03c7ff,#03c3ff,#02c0ff,#02bcff,#02b9ff,#02b4fd,#01affa,#01a9f7,#01a2f4,#009bf1,#0095ed,#008eea,#0088e7,#0083e4,#007ee2,#0079df,#0074dc)"></i>
<i style="top:432px;background:linear-gradient(90deg,#03c6ff,#03c3ff,#02bfff,#02bcff,#02b8ff,#01b4fc,#01affa,#01a9f7,#01a2f4,#009bf0,#0094ed,#008eea,#0088e7,#0082e4,#007de1,#0078de,#0074dc)"></i>
<i style="top:440px;background:linear-gradient(90deg,#03c6ff,#03c2ff,#02bfff,#02bcff,#02b8fe,#01b3fc,#01aef9,#01a8f6,#01a1f3,#009af0,#0094ed,#008de9,#0087e6,#0082e3,#007de1,#0078de,#0073db)"></i>
<i style="top:448px;background:linear-gradient(90deg,#03c5ff,#03c2ff,#02beff,#02bbff,#02b7fe,#01b3fc,#01aef9,#01a8f6,#01a1f3,#009aef,#0093ec,#008ce9,#0087e6,#0081e3,#007ce0,#0077de,#0072db)"></i>
<i style="top:456px;background:linear-gradient(90deg,#03c5ff,#03c1ff,#02beff,#02bbff,#02b7fe,#01b3fb,#01adf9,#01a7f6,#01a0f2,#0099ef,#0092ec,#008ce8,#0086e5,#0080e2,#007be0,#0077dd,#0072db)"></i>
<i style="top:464px;background:linear-gradient(90deg,#03c4ff,#03c1ff,#02bdff,#02baff,#02b7fd,#01b2fb,#01adf8,#01a7f5,#01a0f2,#0099ef,#0092eb,#008be8,#0085e5,#0080e2,#007bdf,#0076dd,#0071da)"></i>
<i style="top:472px;background:linear-gradient(90deg,#03c4ff,#03c0ff,#02bdff,#02baff,#02b6fd,#01b2fa,#01adf8,#01a6f5,#00a0f2,#0098ee,#0091eb,#008be7,#0085e4,#007fe1,#007adf,#0075dc,#0071da)"></i>
<i style="top:480px;background:linear-gradient(90deg,#03c3ff,#03bfff,#02bcff,#02b9fe,#02b6fc,#01b2fa,#01acf7,#01a6f4,#009ff1,#0098ee,#0091ea,#008ae7,#0084e4,#007fe1,#007ade,#0075dc,#0070d9)"></i>
<i style="top:488px;background:linear-gradient(90deg,#03c2ff,#02bfff,#02bcff,#02b9fe,#02b5fc,#01b1fa,#01acf7,#01a6f4,#009ff1,#0097ed,#0090ea,#008ae6,#0083e3,#007ee0,#0079de,#0074db,#0070d9)"></i>
<i style="top:496px;background:linear-gradient(90deg,#03c2ff,#02beff,#02bcff,#02b9fe,#02b5fc,#01b1f9,#01abf7,#01a5f4,#009ef0,#0097ed,#0090e9,#0089e6,#0083e3,#007de0,#0078dd,#0074db,#006fd8)"></i>
<i style="top:504px;background:linear-gradient(90deg,#03c1ff,#02beff,#02bbff,#02b8fd,#02b5fb,#01b0f9,#01abf6,#01a5f3,#009ef0,#0096ec,#008fe9,#0088e5,#0082e2,#007ddf,#0078dd,#0073da,#006fd8)"></i>
<i style="top:512px;background:linear-gradient(90deg,#03c1ff,#02bdff,#02bbff,#02b8fd,#02b4fb,#01b0f8,#01abf6,#01a4f3,#009def,#0096ec,#008fe8,#0088e5,#0082e2,#007cdf,#0077dc,#0073da,#006ed7)"></i>
<i style="top:520px;background:linear-gradient(90deg,#03c0ff,#02bdff,#02bafe,#02b7fc,#02b4fa,#01b0f8,#01aaf5,#01a4f2,#009def,#0095eb,#008ee8,#0087e5,#0081e1,#007cde,#0077dc,#0072d9,#006dd7)"></i>
<i style="top:528px;background:linear-gradient(90deg,#03c0ff,#02bdff,#02bafe,#02b7fc,#02b4fa,#01aff8,#01aaf5,#01a3f2,#009cef,#0095eb,#008de7,#0087e4,#0080e1,#007bde,#0076db,#0071d9,#006dd6)"></i>
<i style="top:536px;background:linear-gradient(90deg,#03bfff,#02bcff,#02b9fd,#02b6fc,#01b3fa,#01aff7,#01a9f5,#01a3f2,#009cee,#0094eb,#008de7,#0086e4,#0080e0,#007ade,#0076db,#0071d8,#006cd6)"></i>
<i style="top:544px;background:linear-gradient(90deg,#03bfff,#02bcff,#02b9fd,#02b6fb,#01b3f9,#01aef7,#01a9f4,#01a2f1,#009bee,#0094ea,#008ce7,#0085e3,#007fe0,#007add,#0075da,#0070d8,#006cd5)"></i>
<i style="top:552px;background:linear-gradient(90deg,#03beff,#02bbff,#02b8fd,#02b6fb,#01b2f9,#01aef6,#01a9f4,#00a2f1,#009bed,#0093ea,#008ce6,#0085e3,#007fdf,#0079dd,#0074da,#0070d7,#006bd5)"></i>
<i style="top:560px;background:linear-gradient(90deg,#03beff,#02bbfe,#02b8fc,#02b5fa,#01b2f8,#01aef6,#01a8f3,#00a2f0,#009aed,#0093e9,#008be6,#0084e2,#007edf,#0079dc,#0074d9,#006fd7,#006bd5)"></i>
<i style="top:568px;background:linear-gradient(90deg,#03bdff,#02bafe,#02b8fc,#02b5fa,#01b2f8,#01adf6,#01a8f3,#00a1f0,#009aed,#0092e9,#008be5,#0084e2,#007edf,#0078dc,#0073d9,#006fd6,#006ad4)"></i>
<i style="top:576px;background:linear-gradient(90deg,#02bdff,#02bafd,#02b7fb,#02b4fa,#01b1f8,#01adf5,#01a7f3,#00a1f0,#0099ec,#0092e8,#008ae5,#0083e1,#007dde,#0078db,#0073d8,#006ed6,#006ad4)"></i>
<i style="top:584px;background:linear-gradient(90deg,#02bcff,#02b9fd,#02b7fb,#02b4f9,#01b1f7,#01acf5,#01a7f2,#00a0ef,#0099ec,#0091e8,#008ae4,#0083e1,#007cde,#0077db,#0072d8,#006ed6,#0069d3)"></i>
<i style="top:592px;background:linear-gradient(90deg,#02bcff,#02b9fd,#02b6fb,#02b4f9,#01b0f7,#01acf5,#01a6f2,#00a0ef,#0098eb,#0091e8,#0089e4,#0082e0,#007cdd,#0076da,#0072d8,#006dd5,#0069d3)"></i>
<i style="top:600px;background:linear-gradient(90deg,#02bbfe,#02b8fc,#02b6fa,#02b3f8,#01b0f6,#01acf4,#01a6f1,#009fee,#0098eb,#0090e7,#0088e3,#0081e0,#007bdd,#0076da,#0071d7,#006cd5,#0068d2)"></i>
<i style="top:608px;background:linear-gradient(90deg,#02bbfe,#02b8fc,#02b5fa,#02b3f8,#01b0f6,#01abf4,#01a6f1,#009fee,#0097ea,#0090e7,#0088e3,#0081df,#007bdc,#0075d9,#0070d7,#006cd4,#0068d2)"></i>
<i style="top:616px;background:linear-gradient(90deg,#02bbfd,#02b8fb,#02b5f9,#02b2f8,#01aff6,#01abf3,#01a5f1,#009eed,#0097ea,#008fe6,#0087e3,#0080df,#007adc,#0075d9,#0070d6,#006bd4,#0067d1)"></i>
<i style="top:624px;background:linear-gradient(90deg,#02bafd,#02b7fb,#02b5f9,#02b2f7,#01aff5,#01aaf3,#01a5f0,#009eed,#0096ea,#008fe6,#0087e2,#0080df,#007adb,#0074d8,#006fd6,#006bd3,#0066d1)"></i>
<i style="top:632px;background:linear-gradient(90deg,#02bafd,#02b7fa,#02b4f9,#02b2f7,#01aef5,#01aaf3,#01a4f0,#009ded,#0096e9,#008ee5,#0086e2,#007fde,#0079db,#0074d8,#006fd5,#006ad3,#0066d0)"></i>
<i style="top:640px;background:linear-gradient(90deg,#02b9fc,#02b6fa,#02b4f8,#01b1f6,#01aef4,#01a9f2,#00a4ef,#009dec,#0095e9,#008de5,#0086e1,#007fde,#0079da,#0073d7,#006ed5,#006ad2,#0065d0)"></i>
<i style="top:648px;background:linear-gradient(90deg,#02b9fc,#02b6fa,#02b3f8,#01b1f6,#01adf4,#01a9f2,#00a3ef,#009dec,#0095e8,#008de5,#0085e1,#007edd,#0078da,#0073d7,#006ed4,#0069d2,#0065d0)"></i>
<i style="top:656px;background:linear-gradient(90deg,#02b8fb,#02b5f9,#02b3f7,#01b0f6,#01adf4,#01a9f1,#00a3ef,#009ceb,#0094e8,#008ce4,#0085e0,#007edd,#0078d9,#0072d7,#006dd4,#0069d1,#0064cf)"></i>
<i style="top:664px;background:linear-gradient(90deg,#02b8fb,#02b5f9,#02b2f7,#01b0f5,#01adf3,#01a8f1,#00a2ee,#009ceb,#0094e7,#008ce4,#0084e0,#007ddc,#0077d9,#0072d6,#006dd3,#0068d1,#0064cf)"></i>
<i style="top:672px;background:linear-gradient(90deg,#02b8fb,#02b5f8,#02b2f7,#01aff5,#01acf3,#01a8f0,#00a2ee,#009beb,#0093e7,#008be3,#0084df,#007ddc,#0076d9,#0071d6,#006cd3,#0068d1,#0063ce)"></i>
<i style="top:680px;background:linear-gradient(90deg,#02b7fa,#02b4f8,#02b2f6,#01aff4,#01acf2,#01a7f0,#00a2ed,#009bea,#0093e7,#008be3,#0083df,#007cdb,#0076d8,#0071d5,#006cd3,#0067d0,#0063ce)"></i>
<i style="top:688px;background:linear-gradient(90deg,#02b7fa,#02b4f8,#02b1f6,#01aff4,#01abf2,#01a7f0,#00a1ed,#009aea,#0092e6,#008ae2,#0083df,#007cdb,#0075d8,#0070d5,#006bd2,#0067d0,#0062cd)"></i>
<i style="top:696px;background:linear-gradient(90deg,#02b6f9,#02b3f7,#02b1f5,#01aef4,#01abf2,#01a6ef,#00a1ed,#009ae9,#0092e6,#008ae2,#0082de,#007bdb,#0075d7,#0070d4,#006bd2,#0066cf,#0062cd)"></i>
<i style="top:704px;background:linear-gradient(90deg,#02b6f9,#02b3f7,#02b0f5,#01aef3,#01aaf1,#01a6ef,#00a0ec,#0099e9,#0091e5,#0089e1,#0082de,#007bda,#0075d7,#006fd4,#006ad1,#0066cf,#0061cd)"></i>
<i style="top:712px;background:linear-gradient(90deg,#02b6f9,#02b3f7,#02b0f5,#01adf3,#01aaf1,#01a5ee,#00a0ec,#0099e8,#0091e5,#0089e1,#0081dd,#007ada,#0074d6,#006fd3,#006ad1,#0065ce,#0061cc)"></i>
<i style="top:720px;background:linear-gradient(90deg,#02b5f8,#02b2f6,#02b0f4,#01adf2,#01a9f0,#01a5ee,#009feb,#0098e8,#0090e4,#0089e1,#0081dd,#007ad9,#0074d6,#006ed3,#0069d0,#0065ce,#0060cc)"></i>
</div>
<div style="position:absolute;left:954px;top:0;width:70px;height:728px;-webkit-mask-image:linear-gradient(90deg,transparent,#000 30px);mask-image:linear-gradient(90deg,transparent,#000 30px);background:linear-gradient(180deg,#0048b8 0px,#024ac2 200px,#0248c4 415px,#0348b8 665px,#0448b4 728px)"></div>
<!--/BG-->
<svg id="bgov" style="position:absolute;left:0;top:0" width="1024" height="728">
  <defs>
    <linearGradient id="bl" x1="0" y1="0" x2="680" y2="0" gradientUnits="userSpaceOnUse"><stop offset="0.15" stop-color="#8fe0ff" stop-opacity="0"/><stop offset="0.5" stop-color="#8fe0ff"/><stop offset="1" stop-color="#8fe0ff"/></linearGradient>
    <filter id="soft" x="-10%" y="-50%" width="120%" height="200%"><feGaussianBlur stdDeviation="2.5"/></filter>
    <linearGradient id="bl2" x1="0" y1="0" x2="680" y2="0" gradientUnits="userSpaceOnUse"><stop offset="0.3" stop-color="#8fe0ff" stop-opacity="0"/><stop offset="0.8" stop-color="#8fe0ff"/><stop offset="1" stop-color="#8fe0ff"/></linearGradient>
  </defs>
  <path d="M0 26 L680 203" stroke="url(#bl)" stroke-width="1.5" opacity="0.09" fill="none"/>
  <path d="M0 541.8 L680 465" stroke="url(#bl2)" stroke-width="6" opacity="0.10" fill="none" filter="url(#soft)"/>
  <rect x="663" y="302" width="12" height="79" fill="#12a4f4"/>
  <rect x="663" y="387" width="12" height="80" fill="#12a4f4"/>
  <rect x="662.5" y="302" width="1.8" height="79" fill="#46d4ff"/>
  <rect x="662.5" y="387" width="1.8" height="80" fill="#46d4ff"/>
  <rect x="662.5" y="302" width="12" height="1.5" fill="#46d4ff"/>
</svg>


<svg id="icons" style="position:absolute;left:0;top:0" width="1024" height="728">
  <defs>
    <g id="sc">
      <rect x="0" y="0" width="13" height="13" fill="#fff"/>
      <rect x="0.5" y="0.5" width="12" height="12" fill="none" stroke="#d0d8e0" stroke-width="1"/>
      <path d="M3.3 12 C3.3 8.6 4.8 6.9 7 6 L5.6 4.3 L10.9 3.1 L10.1 8.4 L8.7 7 C7 8 6.1 9.8 6.1 12 Z" fill="#1a5fb4"/>
    </g>
    <linearGradient id="edgeA" x1="0" y1="0" x2="1" y2="0.6">
      <stop offset="0" stop-color="#3fb2de"/><stop offset="0.5" stop-color="#35bdb8"/><stop offset="1" stop-color="#5fd15a"/>
    </linearGradient>
    <linearGradient id="edgeB" x1="0" y1="0" x2="0.3" y2="1">
      <stop offset="0" stop-color="#2a8de0"/><stop offset="1" stop-color="#1466c6"/>
    </linearGradient>
  </defs>

  <!-- 1 ccsetup589 -->
  <g>
    <path d="M16.2 11 L23.7 22.7 L23.7 51.8 L17 47 Z" fill="#f4f7fa"/>
    <path d="M16.4 11 L17 47" stroke="#b0c4d8" stroke-width="0.8"/>
    <path d="M23.7 22.7 L49 19 L47 50 L23.7 51.8 Z" fill="#b4d6f2"/>
    <path d="M23.7 22.7 L49 19 L48.5 26 L23.7 29 Z" fill="#e6f0f8"/>
    <path d="M16.2 11 L41.2 8.6 L40.5 17.2 L23.7 22.7 Z" fill="#dfe8f0"/>
    <path d="M21 12 L39.5 10.2 L39 16.3 L24.5 19.5 Z" fill="#8fa3b5"/>
    <path d="M42.8 8.6 L52.2 10.2 L49 18.8 L40.5 17.2 Z" fill="#f2f6fa"/>
    <rect x="26.4" y="32" width="7" height="4.7" fill="#f3a13a"/>
    <rect x="26.4" y="36.7" width="7" height="10.2" fill="#2aa150"/>
    <circle cx="48.3" cy="37.5" r="13.7" fill="#223f80"/>
    <circle cx="48.3" cy="37.5" r="12.7" fill="#b9cbe4"/>
    <circle cx="48.3" cy="37.5" r="10.8" fill="#e9eff6"/>
    <path d="M40 30 A10.8 10.8 0 0 1 56 28.5 L49 33 Z" fill="#fbfdff"/>
    <path d="M39.2 33 Q44.5 32.8 50.2 30 Q56 32.8 61 33 L61 41 Q60 49.5 50.2 53 Q40.2 49.5 39.2 41 Z" fill="#1d3470"/>
    <path d="M40.5 34 Q45 33.8 49.4 31.6 L49.4 40.6 L40.5 40.6 Z" fill="#2567c8"/>
    <path d="M51 31.6 Q55.5 33.8 59.8 34 L59.8 40.6 L51 40.6 Z" fill="#f5c242"/>
    <path d="M40.6 42.2 L49.4 42.2 L49.4 51.2 Q42 48.5 40.6 42.2 Z" fill="#f5c242"/>
    <path d="M51 42.2 L59.7 42.2 Q58.5 48.5 51 51.2 Z" fill="#2567c8"/>
  </g>

  <!-- 2 Recycle Bin -->
  <g>
    <path d="M98.2 15.5 L104 12.5 L108 9.8 L113 9 L118 11.5 L124 11 L128 13 L135.7 17 L131.4 46 L119 51 L101.7 47 Z" fill="#e4e9ee"/>
    <path d="M119.7 20 L135.7 17 L131.4 46 L119 51 Z" fill="#d9dfe6"/>
    <path d="M98.2 15.5 L119.7 20 L135.7 17" fill="none" stroke="#f6f8fa" stroke-width="1.3"/>
    <path d="M103 14 Q106 9 112 9.5 Q117 9 119 12 Q125 10.5 130 15.5 L119.7 18.5 Z" fill="#f2f4f6"/>
    <path d="M106 13 Q110 11 114 12.5" fill="none" stroke="#cfd6dd" stroke-width="0.8"/>
    <path d="M118 14 Q123 13 126 15" fill="none" stroke="#cfd6dd" stroke-width="0.8"/>
    <path d="M128 22 L127 40" stroke="#c6d3e4" stroke-width="1.5" opacity="0.6"/>
    <path d="M101.7 47 L119 51 L131.4 46" fill="none" stroke="#c4cbd3" stroke-width="1"/>
    <g transform="translate(109.5,33.2)" fill="none" stroke="#1f6fd1" stroke-width="2.8">
      <path d="M-4.6 -2.7 A5.3 5.3 0 0 1 2.2 -4.8"/>
      <path d="M5.2 -0.6 A5.3 5.3 0 0 1 2.0 4.9"/>
      <path d="M-1.2 5.2 A5.3 5.3 0 0 1 -5.2 0.8"/>
    </g>
    <g transform="translate(109.5,33.2)" fill="#1f6fd1">
      <path d="M1.5 -7.6 L5.6 -3.8 L0.8 -2.2 Z"/>
      <path d="M5.6 2.6 L3.2 7.6 L0.3 3.4 Z"/>
      <path d="M-6.6 4.2 L-7.2 -1.2 L-3.2 1.2 Z"/>
    </g>
  </g>

  <!-- 3 dave -->
  <g>
    <defs><clipPath id="daveclip"><rect x="-4.1" y="-32" width="30" height="60"/></clipPath></defs>
    <path d="M23.5 110.5 L47.5 110.5 L47.5 148 L23.5 148 Z" fill="#f0c768"/>
    <path d="M31.9 115.5 L53.7 117 L53.7 150 L31.9 152 Z" fill="#fbfbfc"/>
    <path d="M44 117 L53.7 117 L53.7 150 L44 150.5 Z" fill="#eef0f3"/>
    <g stroke="#b8bcc4" stroke-width="0.6"><path d="M46 121 L46 147"/><path d="M49 122 L49 147"/></g>
    <g clip-path="url(#daveclip)" transform="translate(36,132.5)">
      <ellipse rx="9.2" ry="15.5" fill="#2aa24f"/>
      <path d="M0 0 L-9.2 -8 A9.2 15.5 0 0 1 8.4 -6.5 Z" fill="#dd4232"/>
      <path d="M0 0 L8.4 -6.5 A9.2 15.5 0 0 1 3.5 14.3 Z" fill="#f3c12e"/>
      <ellipse rx="5.3" ry="7.2" fill="#fff"/>
      <ellipse rx="4.1" ry="5.8" fill="#3a7ee8"/>
    </g>
    <path d="M23.5 110.5 L31.9 115 L31.9 152.5 L23.5 146 Z" fill="#f8d88c"/>
    <path d="M31.9 115 L31.9 152.5" stroke="#e8be62" stroke-width="0.8"/>
  </g>

  <!-- 4 LibreOffice installer -->
  <g>
    <path d="M17.1 223.3 L26 223.3 L26 250.4 L17.1 250.4 Z" fill="#f2f2f4" stroke="#2a2a2a" stroke-width="0.7"/>
    <rect x="18.5" y="236" width="6" height="12" fill="#c8ccd4"/>
    <path d="M26 218 L33.8 218 L33.8 250.4 L26 250.4 Z" fill="#b4b6bc" stroke="#2a2a2a" stroke-width="0.7"/>
    <rect x="26.5" y="219" width="2.2" height="31" fill="#1e1e1e"/>
    <rect x="35.3" y="205.5" width="25.2" height="20.7" fill="#dcdce2" stroke="#333" stroke-width="0.9"/>
    <rect x="37.1" y="208" width="18.6" height="14.6" fill="#13226e"/>
    <rect x="38.4" y="209.3" width="16" height="12" fill="#3f8ee6"/>
    <path d="M39 220 L48 210" stroke="#b8e0ff" stroke-width="3" stroke-dasharray="1.2 1"/>
    <path d="M33.9 226.2 L62.3 226.2 L62.3 232.8 L51.4 232.8 L51.4 235.7 L33.9 235.7 Z" fill="#e6e6ea" stroke="#222" stroke-width="0.9"/>
    <circle cx="41.2" cy="240.8" r="10.8" fill="#d2d6dc" stroke="#3a3a3a" stroke-width="0.6"/>
    <path d="M41.2 240.8 L37 230.8 A10.8 10.8 0 0 1 45 230.5 Z" fill="#f0dc8c"/>
    <path d="M41.2 240.8 L31 237 A10.8 10.8 0 0 1 34 232.5 Z" fill="#5cb0e0"/>
    <path d="M41.2 240.8 L44 251.2 A10.8 10.8 0 0 1 38 251.2 Z" fill="#eed888"/>
    <path d="M41.2 240.8 L51.5 244 A10.8 10.8 0 0 1 47.5 249.5 Z" fill="#8cc4ea"/>
    <circle cx="41.2" cy="240.8" r="2.8" fill="#111"/>
    <circle cx="41.2" cy="240.8" r="1.3" fill="#40b0f0"/>
  </g>

  <!-- 5 Pictures - Shortcut -->
  <g>
    <rect x="257.2" y="210" width="25.2" height="38" fill="#f2cb6c"/>
    <path d="M257.2 210 L266 214.5 L266 249 L257.2 244.5 Z" fill="#f8d98f"/>
    <rect x="267.7" y="226.7" width="26.3" height="19" fill="#f4f6f8"/>
    <rect x="269.3" y="228.3" width="23.1" height="15.8" fill="#86b9e8"/>
    <path d="M269.3 236 Q275 233 280 236 Q285 238 292.4 237 L292.4 244.1 L269.3 244.1 Z" fill="#4f6a74"/>
    <path d="M269.3 240 L292.4 240.5 L292.4 244.1 L269.3 244.1 Z" fill="#8aa3b0"/>
    <path d="M274 233 Q280 231 288 232.5 L288 234 Q280 233 274 234.5 Z" fill="#dfeaf2"/>
    <use href="#sc" x="249" y="240"/>
  </g>

  <!-- 6 recovery doc -->
  <g>
    <path d="M24 307.8 L47 307.8 L54.2 315 L54.2 347.9 L24 347.9 Z" fill="#fcfcfc"/>
    <path d="M47 307.8 L47 315 L54.2 315 Z" fill="#dfe3e8"/>
    <g stroke="#8a7f7f" stroke-width="0.9">
      <path d="M26 311.5 L45 311.5"/><path d="M26 314.5 L45 314.5"/>
      <path d="M26 317.5 L52 317.5"/><path d="M26 320.5 L52 320.5"/><path d="M26 323.5 L52 323.5"/>
      <path d="M26 326.5 L52 326.5"/><path d="M26 329.5 L52 329.5"/><path d="M26 332.5 L52 332.5"/>
      <path d="M26 335.5 L52 335.5"/><path d="M26 338.5 L52 338.5"/><path d="M26 341.5 L52 341.5"/>
      <path d="M26 344.5 L52 344.5"/>
    </g>
  </g>

  <!-- 7 avast -->
  <g>
    <rect x="171.7" y="303.9" width="47.3" height="47.9" rx="8.5" fill="#fdfdfd"/>
    <circle cx="195.3" cy="328.3" r="19.6" fill="#f47a14"/>
    <g stroke="#fff1e4" stroke-linecap="round" fill="none">
      <path d="M193.8 314.5 L201 329" stroke-width="6"/>
      <path d="M186.5 326 L197 332" stroke-width="4.6"/>
      <path d="M181.8 333.6 L196 335.6" stroke-width="3.4"/>
      <path d="M180.5 339.8 L196 337.2" stroke-width="1.6"/>
    </g>
    <path d="M196.2 333 Q202 332 207 328.5 Q212 332 217.8 333 L217.8 340 Q216.5 348 207 351.3 Q197.5 348 196.2 340 Z" fill="#23324a"/>
    <path d="M197.8 334.2 Q202 333.5 206.1 330.6 L206.1 339.2 L197.8 339.2 Z" fill="#2a6fd0"/>
    <path d="M207.9 330.6 Q212 333.5 216.2 334.2 L216.2 339.2 L207.9 339.2 Z" fill="#f6c343"/>
    <path d="M197.9 341 L206.1 341 L206.1 349.3 Q199.3 346.8 197.9 341 Z" fill="#f6c343"/>
    <path d="M207.9 341 L216.1 341 Q214.7 346.8 207.9 349.3 Z" fill="#2a6fd0"/>
  </g>

  <!-- 8 LibreOffice 7.3 -->
  <g>
    <path d="M21.2 405 L40.5 405 L57.8 422.5 L57.8 449.3 L21.2 449.3 Z" fill="#fcfcfc" stroke="#5d5d5d" stroke-width="1.6"/>
    <path d="M48 403.2 L58.6 403.2 L58.6 413.8 Z" fill="#6d6d6d"/>
    <use href="#sc" x="15.2" y="437.7"/>
  </g>

  <!-- 9 Chrome -->
  <g transform="translate(194.8,426.8)">
    <circle r="21.8" fill="#2ea24f"/>
    <path d="M0 0 L-12 -18.2 A21.8 21.8 0 0 1 18.9 -10.9 Z" fill="#dc4335"/>
    <path d="M-12 -18.2 A21.8 21.8 0 0 1 0 -21.8 L0 0 Z" fill="#dc4335"/>
    <path d="M0 0 L18.9 -10.9 A21.8 21.8 0 0 1 0 21.8 L-2 21.7 Z" fill="#f6c12b"/>
    <circle r="10.2" fill="#fff"/>
    <circle r="8.3" fill="#3d80e6"/>
    <use href="#sc" x="-24" y="10.9"/>
  </g>

  <!-- 10 Edge -->
  <g>
    <path d="M15 522.3 C17 518 22 514 28 513.3 C33 513 37.5 514.5 40.4 517.6 C42.5 520 43.8 524 43.8 528 C43.8 531 46 533 49.9 533.2 C54 534 58 532.5 60.7 530.4 C59 540 50 549.5 38.5 549.5 C25 549.5 15 538 15 525 Z" fill="url(#edgeB)"/>
    <ellipse cx="40.5" cy="528" rx="5.8" ry="8.2" fill="#2a9ae8"/>
    <path d="M15 522.3 C16 512 26 503 38 502.7 C52 502.5 63 511 63.4 522.3 C63.5 527 62 530 60.7 530.4 C57 533.5 52 534 49.9 533.2 C46 532 43.8 530 43.8 528 C43.8 522 42 518.5 40.4 517.6 C37 514 32 513 28 513.3 C22 514 17 518 15 522.3 Z" fill="url(#edgeA)"/>
    <path d="M34.3 521 C30 524 28.5 530 29.6 537.9 C31 544 35 547.4 37.7 547.4 C43 548.5 47 547.5 49.9 546.7 C54 545.5 57.5 541.5 59.4 537.9 C54 539.8 47 539.8 42 537.2 C37 534.5 35.3 528 34.3 521 Z" fill="#1b4fa6"/>
    <use href="#sc" x="15.2" y="537"/>
  </g>
</svg>
<div class="lbl" style="left:-6.5px;top:59px">ccsetup589</div>
<div class="lbl" style="left:72px;top:59px">Recycle Bin</div>
<div class="lbl" style="left:-6.5px;top:159px">dave</div>
<div class="lbl" style="left:-6.5px;top:258px">LibreOffice_...</div>
<div class="lbl" style="left:228px;top:258px">Pictures -<br>Shortcut</div>
<div class="lbl" style="left:-6.5px;top:357px">recovery_c...</div>
<div class="lbl" style="left:149.6px;top:357px">avast_one_e...</div>
<div class="lbl" style="left:-6.5px;top:456px">LibreOffice<br>7.3</div>
<div class="lbl" style="left:149.6px;top:456px">Google<br>Chrome</div>
<div class="lbl" style="left:-6.5px;top:555px">Microsoft<br>Edge</div>

<div id="taskbar">
<svg style="position:absolute;left:0;top:0" width="1024" height="40">
  <!-- start -->
  <g fill="#000">
    <path d="M16 12.2 L23.3 11.6 L23.3 19 L16 19 Z"/>
    <path d="M24.5 11.5 L32.2 10.8 L32.2 19 L24.5 19 Z"/>
    <path d="M16 20.2 L23.3 20.2 L23.3 27.6 L16 27 Z"/>
    <path d="M24.5 20.2 L32.2 20.2 L32.2 28.4 L24.5 27.7 Z"/>
  </g>
  <!-- cortana -->
  <circle cx="71.9" cy="19.8" r="6.8" fill="none" stroke="#000" stroke-width="2.2"/>
  <!-- task view -->
  <g fill="#000">
    <rect x="111.5" y="11.5" width="1.2" height="3"/>
    <rect x="111.5" y="11.5" width="11" height="1.2"/>
    <rect x="112" y="15" width="1.3" height="8"/>
    <rect x="112" y="15" width="10" height="1.3"/>
    <rect x="112" y="21.7" width="10" height="1.3"/>
    <rect x="111.5" y="25.8" width="11" height="1.2"/>
    <rect x="111.5" y="24" width="1.2" height="3"/>
    <rect x="120.8" y="15" width="1.3" height="8"/>
    <rect x="126.4" y="11" width="1.2" height="4"/>
    <rect x="125.4" y="16" width="2.5" height="3"/>
    <rect x="126.4" y="19.5" width="1.2" height="7.5"/>
  </g>
  <!-- explorer -->
  <g>
    <path d="M160 11 L168 11 L169.5 12.5 L181.6 12.5 L181.6 28 L160 28 Z" fill="#f4c542"/>
    <rect x="160" y="14.5" width="21.6" height="13.5" fill="#f8d775"/>
    <rect x="160" y="11" width="8" height="2" fill="#ef8a2a"/>
    <path d="M164.5 20 L177 20 L177 28 L173.6 28 L173.6 23.5 L168 23.5 L168 28 L164.5 28 Z" fill="#1e88d8"/>
  </g>
  <!-- edge -->
  <g>
    <circle cx="219.6" cy="19.8" r="12" fill="url(#edgeA)"/>
    <path d="M207.6 19.8 Q208 11 216 9.5 Q226 8.5 229 16 Q230 21 225 22 Q221 22.5 219.5 20 Q218.5 17.5 221 14.5 Q214 14.5 213 22 Q213 29 220.5 31.8 Q209 31 207.6 19.8 Z" fill="#1f8ce0"/>
    <path d="M221 14.5 Q215 17 216 25 Q218 31 226 30.8 Q230 29.5 231.5 26 Q227.5 28 223 27 Q218.5 25.5 218.5 21 Q218.5 17 221 14.5 Z" fill="#0b4aa8"/>
  </g>
  <!-- chrome -->
  <g transform="translate(268.7,19.8)">
    <circle r="11" fill="#2ea24f"/>
    <path d="M0 0 L-6 -9.2 A11 11 0 0 1 9.5 -5.5 Z" fill="#dc4335"/>
    <path d="M-6 -9.2 A11 11 0 0 1 0 -11 L0 0 Z" fill="#dc4335"/>
    <path d="M0 0 L9.5 -5.5 A11 11 0 0 1 0 11 L-1 11 Z" fill="#f6c12b"/>
    <circle r="5.2" fill="#fff"/>
    <circle r="4.1" fill="#3d80e6"/>
  </g>
  <!-- store -->
  <g>
    <path d="M311.5 14 L311.5 11 Q311.5 9 313.5 9 L321 9 Q323 9 323 11 L323 14" fill="none" stroke="#2f8bd8" stroke-width="1.6"/>
    <path d="M305.8 14 L328.8 14 L328.8 30 Q328.8 32 326.8 32 L307.8 32 Q305.8 32 305.8 30 Z" fill="#1a4f8c"/>
    <rect x="312.6" y="18" width="4" height="4" fill="#f25022"/>
    <rect x="317.6" y="18" width="4" height="4" fill="#7fba00"/>
    <rect x="312.6" y="23" width="4" height="4" fill="#00a4ef"/>
    <rect x="317.6" y="23" width="4" height="4" fill="#ffb900"/>
  </g>
  <!-- tray -->
  <g fill="none" stroke="#000" stroke-width="1.2">
    <circle cx="779" cy="19" r="3"/>
    <path d="M773.5 27 Q774 22.5 779 22.3 Q784 22.5 784.5 27"/>
    <path d="M785 18.5 Q787 17.5 788 18.5"/>
    <path d="M811 23 L817 17.8 L823 23"/>
    <path d="M836.5 17.5 L836.5 24 Q836.5 27.5 841.5 27.5 Q846.5 27.5 846.5 24 L846.5 17.5"/>
    <path d="M838.5 22 Q841.5 24.5 844.5 22"/>
    <path d="M857.8 17.8 L857.8 27.5"/>
    <path d="M857.8 21 L873.5 21"/>
    <path d="M862 17.8 L862 25.5 L873 25.5 L873 17.8"/>
    <path d="M860 27.5 L866 27.5"/>
    <path d="M880.5 20 L880.5 25 L884 25 L888 28 L888 17.5 L884 21 Z"/>
    <path d="M890.5 19 Q892 22.5 890.5 26"/>
    <path d="M893.5 17.5 Q896 22.5 893.5 27.5"/>
  </g>
  <!-- date -->
  <text x="907" y="32.8" font-family="Liberation Sans" font-size="12" letter-spacing="-0.25" fill="#000">24/02/2022</text>
  <!-- notification -->
  <path d="M983 11.8 L999.5 11.8 L999.5 23.5 L991 23.5 L987 27.5 L987 23.5 L983 23.5 Z" fill="#000"/>
  <rect x="985.5" y="14.2" width="11" height="1.3" fill="#fff"/>
  <rect x="985.5" y="17.2" width="11" height="1.3" fill="#fff"/>
  <rect x="985.5" y="20.2" width="8" height="1.3" fill="#fff"/>
  <circle cx="998.6" cy="27" r="7.4" fill="#d4dbe2" stroke="#4a4a4a" stroke-width="1"/>
  <path d="M996.2 23.8 L999.2 21.8 L999.2 31.8" fill="none" stroke="#000" stroke-width="1.8"/>
  <rect x="1019" y="0" width="1" height="40" fill="#a8b4be"/>
</svg>
</div>

<div id="menu">
  <div class="mi" style="top:18px">Toolbars</div>
  <div class="sep" style="top:45px"></div>
  <div class="mi" style="top:59px">Search</div>
  <div class="mi" style="top:91px">News and interests</div>
  <div class="mi" style="top:123px">Show Cortana button</div>
  <div class="mi" style="top:155px">Show Task View button</div>
  <div class="mi" style="top:187px">Show People on the taskbar</div>
  <div class="mi" style="top:219px">Show Windows Ink Workspace button</div>
  <div class="mi" style="top:251px">Show touch keyboard button</div>
  <div class="sep" style="top:278px"></div>
  <div class="mi dis" style="top:292px">Cascade windows</div>
  <div class="mi dis" style="top:324px">Show windows stacked</div>
  <div class="mi dis" style="top:356px">Show windows side by side</div>
  <div class="mi" style="top:388px">Show the desktop</div>
  <div class="sep" style="top:415px"></div>
  <div class="mi" style="top:429px">Task Manager</div>
  <div class="sep" style="top:456px"></div>
  <div class="mi" style="top:470px">Lock the taskbar</div>
  <div class="mi" style="top:502px">Taskbar settings</div>
  <svg style="position:absolute;left:0;top:0" width="312" height="533">
    <g fill="none" stroke="#2a2a2a" stroke-width="1.3">
      <path d="M293.5 18.5 L300 24.5 L293.5 30.5"/>
      <path d="M293.5 59.5 L300 65.5 L293.5 71.5"/>
      <path d="M293.5 91.5 L300 97.5 L293.5 103.5"/>
    </g>
    <g fill="none" stroke="#333" stroke-width="1.4">
      <path d="M11.5 130.2 L15.2 133.3 L23.7 125.1"/>
      <path d="M11.5 162.2 L15.2 165.3 L23.7 157.1"/>
      <path d="M11.5 194.2 L15.2 197.3 L23.7 189.1"/>
      <path d="M11.5 477.2 L15.2 480.3 L23.7 472.1"/>
    </g>
    <g transform="translate(17.5,508)" fill="#333">
      <path d="M-1.4,-6.5 h2.8 l0.5,1.9 a5,5 0 0 1 1.6,0.9 l1.9,-0.6 l1.4,2.4 l-1.4,1.3 a5,5 0 0 1 0,1.9 l1.4,1.3 l-1.4,2.4 l-1.9,-0.6 a5,5 0 0 1 -1.6,0.9 l-0.5,1.9 h-2.8 l-0.5,-1.9 a5,5 0 0 1 -1.6,-0.9 l-1.9,0.6 l-1.4,-2.4 l1.4,-1.3 a5,5 0 0 1 0,-1.9 l-1.4,-1.3 l1.4,-2.4 l1.9,0.6 a5,5 0 0 1 1.6,-0.9 z M0,-2.4 a2.4,2.4 0 1 0 0.01,0 z" fill-rule="evenodd"/>
    </g>
  </svg>
</div>
<!-- red highlight -->
<div style="position:absolute;left:642px;top:306px;width:272px;height:125px;border:7px solid #fb3f48;"></div>
<!-- cursor -->
<svg style="position:absolute;left:0;top:0" width="1024" height="768">
  <path d="M905.3 375 L952.4 422.4 L933.6 422.4 L945.4 442.9 L930.7 449.9 L919.6 428.2 L905.3 441.7 Z" fill="#000"/>
  <path d="M909 384.9 L942.4 418.9 L929 418.9 L939.5 441.7 L932.5 445.2 L919.6 422.4 L909 432.9 Z" fill="#f8f8f8"/>
</svg>

</body></html>
